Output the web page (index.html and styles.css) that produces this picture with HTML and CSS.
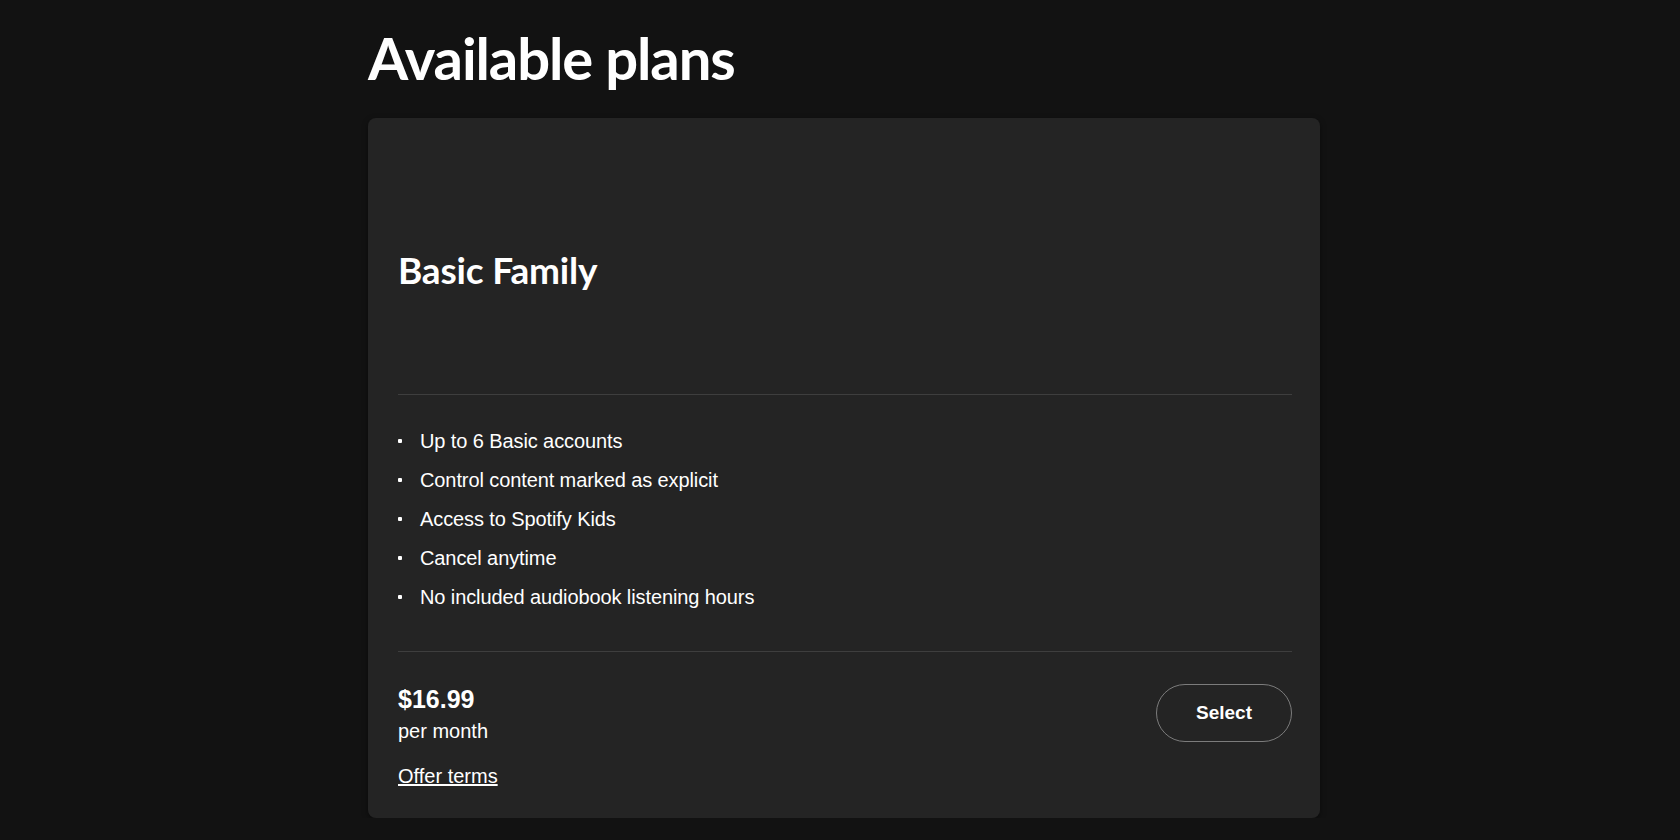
FILE: index.html
```html
<!DOCTYPE html>
<html lang="en">
<head>
    <meta charset="UTF-8">
    <meta name="viewport" content="width=device-width, initial-scale=1.0">
    <title>Available plans</title>
    <link rel="stylesheet" href="styles.css">
</head>
<body>
    <div class="page">
        <h1>Available plans</h1>
        <div class="plan-card">
            <div class="plan-header">
                <h2>Basic Family</h2>
            </div>
            <ul class="features">
                <li>Up to 6 Basic accounts</li>
                <li>Control content marked as explicit</li>
                <li>Access to Spotify Kids</li>
                <li>Cancel anytime</li>
                <li>No included audiobook listening hours</li>
            </ul>
            <div class="plan-footer">
                <div class="price-info">
                    <div class="price">$16.99</div>
                    <div class="period">per month</div>
                    <a href="#" class="terms">Offer terms</a>
                </div>
                <button type="button" class="btn-select">Select</button>
            </div>
        </div>
    </div>
</body>
</html>
```

FILE: styles.css
```css
body {
    margin: 0;
    background-color: #121212;
    color: #fff;
    font-family: "Liberation Sans", Arial, sans-serif;
}
.page {
    width: 952px;
    margin-left: 368px;
    padding-top: 23px;
}
h1 {
    font-family: Lato, "Liberation Sans", sans-serif;
    font-weight: 700;
    font-size: 58px;
    line-height: 1.2;
    letter-spacing: -1.1px;
    margin: 0 0 25px;
}
.plan-card {
    background-color: #242424;
    border-radius: 8px;
    padding: 0 28px 30px 30px;
    box-shadow: 0 2px 6px rgba(0,0,0,0.4);
}
.plan-header {
    height: 277px;
    box-sizing: border-box;
    padding: 130px 0 0 0;
    border-bottom: 1px solid #3e3e3e;
}
h2 {
    font-family: Lato, "Liberation Sans", sans-serif;
    font-weight: 700;
    font-size: 37px;
    line-height: 1.2;
    letter-spacing: -0.2px;
    margin: 0;
}
.features {
    list-style: none;
    margin: 0;
    padding: 34px 0 42px 0;
    display: flex;
    flex-direction: column;
    gap: 15px;
    border-bottom: 1px solid #3e3e3e;
    font-size: 20px;
    line-height: 24px;
    letter-spacing: -0.1px;
}
.features li {
    display: flex;
    align-items: center;
}
.features li::before {
    content: '';
    width: 4px;
    height: 4px;
    border-radius: 1px;
    background-color: #fff;
    margin-right: 18px;
}
.plan-footer {
    display: flex;
    justify-content: space-between;
    align-items: flex-start;
    padding-top: 32px;
}
.price {
    font-size: 25px;
    font-weight: 700;
    line-height: 30px;
}
.period {
    font-size: 20px;
    line-height: 24px;
    margin-top: 5px;
}
.terms {
    display: inline-block;
    margin-top: 21px;
    font-size: 20px;
    line-height: 24px;
    color: #fff;
    text-decoration: underline;
}
.btn-select {
    height: 58px;
    padding: 0 39px;
    background: transparent;
    color: #fff;
    border: 1px solid #7c7c7c;
    border-radius: 500px;
    font-family: "Liberation Sans", Arial, sans-serif;
    font-size: 19px;
    font-weight: 700;
    cursor: pointer;
}
```
